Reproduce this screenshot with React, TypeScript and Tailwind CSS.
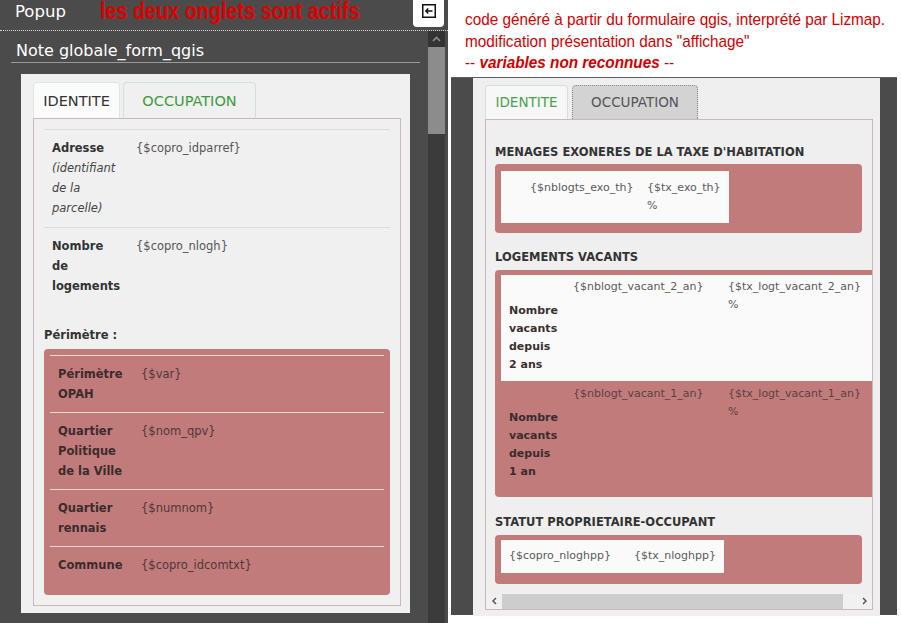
const narrow = "font-['Liberation_Sans',Arial,sans-serif] whitespace-nowrap origin-left";

export default function App() {
  return (
    <div className="flex h-[623px] w-[901px] overflow-hidden bg-white font-['DejaVu_Sans',sans-serif] text-[11.5px]">
      <PopupPanel />
      <LizmapSide />
    </div>
  );
}

const PopupPanel = () => {
  return (
    <div className="flex h-full w-[448px] shrink-0 flex-col bg-[#4b4b4b]">
      <div className="flex h-[31px] shrink-0 items-start border-b border-dotted border-[#d8d8d8]">
        <span className="pl-[15px] pt-[2px] text-[16.5px] leading-[20px] text-white">Popup</span>
        <span
          className={`${narrow} -mt-[1px] ml-[34px] -mr-[55px] inline-block w-[315px] shrink-0 scale-x-[0.825] text-[24px] font-bold leading-[24px] text-[#e00000]`}
        >
          les deux onglets sont actifs
        </span>
        <button className="mr-[4px] ml-auto flex h-[27px] w-[31px] justify-center rounded-b-[4px] bg-white pt-[4px]">
          <svg width="14" height="14" viewBox="0 0 14 14" fill="none" stroke="#111">
            <rect x="0.75" y="0.75" width="12.5" height="12.5" strokeWidth="1.5" />
            <path d="M10.5 7H3.8M6.3 4.5 3.8 7l2.5 2.5" strokeWidth="1.4" />
          </svg>
        </button>
      </div>
      <div className="flex min-h-0 flex-1">
        <div className="w-[428px]">
          <div className="mt-[10px] ml-[11px] w-[409px] border-b border-[#9a9a9a] pb-[1px] pl-[5px] text-[16px] leading-[20px] text-white">
            Note globale_form_qgis
          </div>
          <IdentiteCard />
        </div>
        <div className="mr-[3px] flex w-[17px] flex-col bg-[#3b3b3b]">
          <div className="flex h-[16px] items-center justify-center bg-[#333333]">
            <svg width="9" height="6" viewBox="0 0 9 6" fill="none" stroke="#8d8d8d" strokeWidth="1.6">
              <path d="M1 5 4.5 1.5 8 5" />
            </svg>
          </div>
          <div className="h-[87px] bg-[#8c8c8c]" />
        </div>
      </div>
    </div>
  );
};

const IdentiteCard = () => {
  return (
    <div className="mt-[11px] ml-[21px] w-[389px] bg-[#f0f0f0] pt-[8px] pr-[9px] pb-[7px] pl-[12px] leading-[20px]">
      <div className="flex h-[36px]">
        <div className="flex w-[87px] items-center justify-center rounded-t-[4px] border border-b-0 border-[#dde5e5] bg-[#fbfbfb] text-[14.5px] text-[#333]">
          IDENTITE
        </div>
        <div className="ml-[3px] flex w-[133px] items-center justify-center rounded-t-[4px] border border-b-0 border-[#cfdfdf] text-[14.5px] text-[#3d9a3d]">
          OCCUPATION
        </div>
      </div>
      <div className="border border-[#c9b9b9] px-[10px] pt-[10px] pb-[10px]">
        <div className="flex border-t border-[#dcdcdc]">
          <div className="w-[84px] shrink-0 pt-[8px] pr-[6px] pb-[9px] pl-[8px] text-[#333]">
            <b>Adresse</b> <i className="text-[#444]">(identifiant de la parcelle)</i>
          </div>
          <div className="pt-[8px] pl-[8px] text-[#555]">{'{$copro_idparref}'}</div>
        </div>
        <div className="flex border-t border-[#dcdcdc]">
          <div className="w-[84px] shrink-0 pt-[8px] pr-[6px] pb-[9px] pl-[8px] font-bold text-[#333]">
            Nombre de logements
          </div>
          <div className="pt-[8px] pl-[8px] text-[#555]">{'{$copro_nlogh}'}</div>
        </div>
        <div className="mt-[20px] font-bold text-[#333]">Périmètre :</div>
        <div className="mt-[4px] rounded-[4px] bg-[#c27b7b] px-[6px] pt-[6px] pb-[12px]">
          <PerimetreRow label="Périmètre OPAH" value="{$var}" />
          <PerimetreRow label="Quartier Politique de la Ville" value="{$nom_qpv}" />
          <PerimetreRow label="Quartier rennais" value="{$numnom}" />
          <PerimetreRow label="Commune" value="{$copro_idcomtxt}" />
        </div>
      </div>
    </div>
  );
};

const PerimetreRow = ({ label, value }: { label: string; value: string }) => {
  return (
    <div className="flex border-t border-[#ecd9d9]">
      <div className="w-[83px] shrink-0 px-[8px] py-[8px] font-bold text-[#3b2c2c]">{label}</div>
      <div className="py-[8px] pl-[8px] text-[#4d3838]">{value}</div>
    </div>
  );
};

const LizmapSide = () => {
  return (
    <div className="flex min-w-0 flex-1 flex-col">
      <div className="pt-[9px] pl-[17px] text-[17px] leading-[21.5px] text-[#d40000]">
        <div className={`${narrow} scale-x-[0.9]`}>
          code généré à partir du formulaire qgis, interprété par Lizmap.
        </div>
        <div className={`${narrow} scale-x-[0.9]`}>modification présentation dans "affichage"</div>
        <div className={`${narrow} scale-x-[0.9]`}>
          -- <b className="italic">variables non reconnues</b> --
        </div>
      </div>
      <div className="mt-[3px] ml-[3px] h-[538px] w-[446px] border-t border-[#5e5e5e] bg-[#4b4b4b] pl-[22px]">
        <OccupationCard />
      </div>
    </div>
  );
};

const OccupationCard = () => {
  return (
    <div className="w-[407px] bg-[#efefef] pt-[7px] pr-[7px] pb-[6px] pl-[12px] text-[11px] leading-[18px]">
      <div className="flex h-[34px]">
        <div className="flex w-[83px] items-center justify-center rounded-t-[4px] border border-b-0 border-[#d7dede] bg-[#f7f7f7] text-[13.5px] text-[#4aa24a]">
          IDENTITE
        </div>
        <div className="ml-[4px] flex w-[126px] items-center justify-center rounded-t-[4px] border border-b-0 border-dotted border-[#8a8a8a] bg-[#d3d3d3] text-[13.5px] text-[#555]">
          OCCUPATION
        </div>
      </div>
      <div className="overflow-hidden border border-[#c9b9b9]">
        <div className="pt-[23px] pr-[10px] pl-[9px]">
          <h3 className="text-[11.5px] font-bold text-[#333]">MENAGES EXONERES DE LA TAXE D'HABITATION</h3>
          <div className="mt-[3px] rounded-[4px] bg-[#c27b7b] px-[6px] pt-[7px] pb-[10px]">
            <div className="flex w-[228px] bg-[#fafafa] text-[#5a5a5a]">
              <div className="w-[21px] shrink-0" />
              <div className="w-[117px] shrink-0 py-[8px] pl-[8px] whitespace-nowrap">{'{$nblogts_exo_th}'}</div>
              <div className="w-[90px] shrink-0 py-[8px] pl-[8px] whitespace-nowrap">
                <div>{'{$tx_exo_th}'}</div>
                <div>%</div>
              </div>
            </div>
          </div>

          <h3 className="mt-[15px] text-[11.5px] font-bold text-[#333]">LOGEMENTS VACANTS</h3>
          <div className="mt-[4px] w-max rounded-[4px] bg-[#c27b7b] px-[6px] pt-[5px] pb-[8px]">
            <VacantRow
              label="Nombre vacants depuis 2 ans"
              count="{$nblogt_vacant_2_an}"
              rate="{$tx_logt_vacant_2_an}"
              white
            />
            <VacantRow
              label="Nombre vacants depuis 1 an"
              count="{$nblogt_vacant_1_an}"
              rate="{$tx_logt_vacant_1_an}"
            />
          </div>

          <h3 className="mt-[16px] text-[11.5px] font-bold text-[#333]">STATUT PROPRIETAIRE-OCCUPANT</h3>
          <div className="mt-[4px] rounded-[4px] bg-[#c27b7b] px-[6px] pt-[5px] pb-[11px]">
            <div className="flex w-[223px] bg-[#fafafa] text-[#5a5a5a]">
              <div className="w-[125px] shrink-0 pt-[7px] pb-[8px] pl-[8px] whitespace-nowrap">{'{$copro_nloghpp}'}</div>
              <div className="w-[98px] shrink-0 pt-[7px] pb-[8px] pl-[8px] whitespace-nowrap">{'{$tx_nloghpp}'}</div>
            </div>
          </div>
        </div>
        <div className="mt-[10px] flex h-[15px] items-center bg-[#f1f1f1]">
          <div className="flex w-[16px] justify-center">
            <svg width="5" height="8" viewBox="0 0 5 8" fill="none" stroke="#555" strokeWidth="1.5">
              <path d="M4 1 1 4l3 3" />
            </svg>
          </div>
          <div className="h-full w-[341px] bg-[#cdcdcd]" />
          <div className="flex-1" />
          <div className="flex w-[16px] justify-center">
            <svg width="5" height="8" viewBox="0 0 5 8" fill="none" stroke="#555" strokeWidth="1.5">
              <path d="M1 1l3 3-3 3" />
            </svg>
          </div>
        </div>
      </div>
    </div>
  );
};

const VacantRow = ({
  label,
  count,
  rate,
  white,
}: {
  label: string;
  count: string;
  rate: string;
  white?: boolean;
}) => {
  return (
    <div className={white ? 'flex bg-[#fafafa] text-[#5a5a5a]' : 'flex text-[#5a4242]'}>
      <div
        className={
          white
            ? 'w-[64px] shrink-0 pt-[27px] pr-[6px] pb-[7px] pl-[8px] font-bold text-[#3a3030]'
            : 'w-[64px] shrink-0 pt-[28px] pr-[6px] pb-[8px] pl-[8px] font-bold text-[#3a2c2c]'
        }
      >
        {label}
      </div>
      <div className={white ? 'w-[155px] shrink-0 pt-[3px] pl-[8px]' : 'w-[155px] shrink-0 pt-[4px] pl-[8px]'}>
        {count}
      </div>
      <div className={white ? 'w-[160px] shrink-0 pt-[3px] pl-[8px]' : 'w-[160px] shrink-0 pt-[4px] pl-[8px]'}>
        <div>{rate}</div>
        <div>%</div>
      </div>
    </div>
  );
};
